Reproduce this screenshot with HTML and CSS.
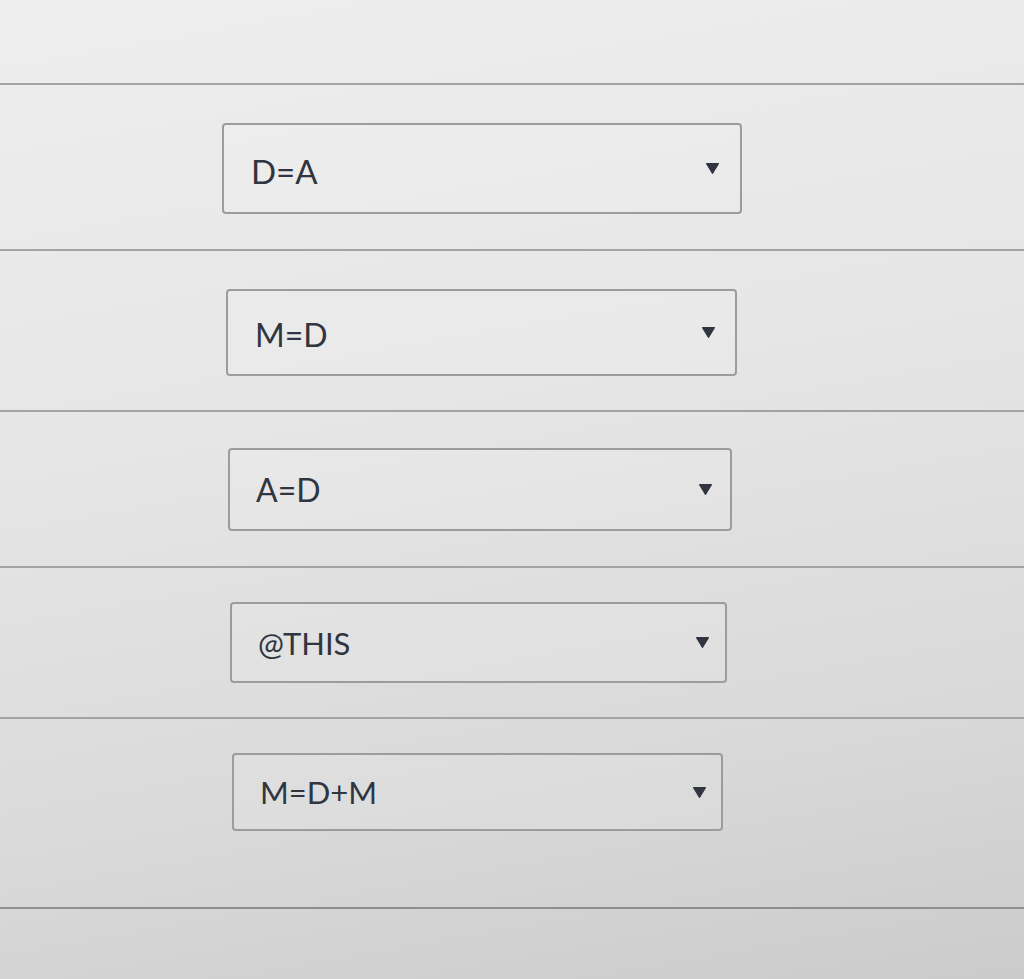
FILE: index.html
```html
<!DOCTYPE html>
<html>
<head>
<meta charset="utf-8">
<link rel="stylesheet" href="styles.css">
</head>
<body>
<div class="page">
  <div class="row r1"><div class="sel"><span class="val">D=A</span><svg class="arrow" viewBox="0 0 12 10"><path d="M0.5 0.5 H11.5 L6 9.5 Z"/></svg></div></div>
  <div class="row r2"><div class="sel"><span class="val">M=D</span><svg class="arrow" viewBox="0 0 12 10"><path d="M0.5 0.5 H11.5 L6 9.5 Z"/></svg></div></div>
  <div class="row r3"><div class="sel"><span class="val">A=D</span><svg class="arrow" viewBox="0 0 12 10"><path d="M0.5 0.5 H11.5 L6 9.5 Z"/></svg></div></div>
  <div class="row r4"><div class="sel"><span class="val">@THIS</span><svg class="arrow" viewBox="0 0 12 10"><path d="M0.5 0.5 H11.5 L6 9.5 Z"/></svg></div></div>
  <div class="row r5"><div class="sel"><span class="val">M=D+M</span><svg class="arrow" viewBox="0 0 12 10"><path d="M0.5 0.5 H11.5 L6 9.5 Z"/></svg></div></div>
  <div class="end"></div>
</div>
</body>
</html>
```
FILE: styles.css
```css
html, body {
  margin: 0;
  padding: 0;
}
body {
  width: 1024px;
  height: 979px;
  overflow: hidden;
  background: linear-gradient(170deg, #eeeeee 0%, #e6e6e6 40%, #d9d9d9 75%, #cbcbcb 100%);
  font-family: Lato, "Open Sans", sans-serif;
  color: #30353f;
}
.page {
  padding-top: 83px;
  display: flex;
  flex-direction: column;
}
.row {
  border-top: 2px solid #a3a3a3;
  display: flex;
}
.end {
  border-top: 2px solid #8e8e8e;
}
.sel {
  box-sizing: border-box;
  border: 2px solid #9c9c9c;
  border-radius: 4px;
  background: rgba(255, 255, 255, 0.12);
  display: flex;
  align-items: center;
  justify-content: space-between;
}
.arrow {
  width: 13px;
  height: 11px;
  fill: #30353f;
  stroke: #30353f;
  stroke-width: 1;
  stroke-linejoin: round;
}
.r1 { padding: 38px 0 35px 222px; }
.r1 .sel { width: 520px; height: 91px; padding: 0 21px 0 27px; font-size: 33px; }
.r1 .val { padding-top: 5px; }
.r2 { padding: 38px 0 34px 226px; }
.r2 .sel { width: 511px; height: 87px; padding: 0 20px 0 27px; font-size: 32px; }
.r2 .val { padding-top: 3px; }
.r3 { padding: 36px 0 35px 228px; }
.r3 .sel { width: 504px; height: 83px; padding: 0 18px 0 26px; font-size: 32px; }
.r4 { padding: 34px 0 34px 230px; }
.r4 .sel { width: 497px; height: 81px; padding: 0 16px 0 26px; font-size: 31px; }
.r5 { padding: 34px 0 76px 232px; }
.r5 .sel { width: 491px; height: 78px; padding: 0 15px 0 26px; font-size: 31px; }
```
